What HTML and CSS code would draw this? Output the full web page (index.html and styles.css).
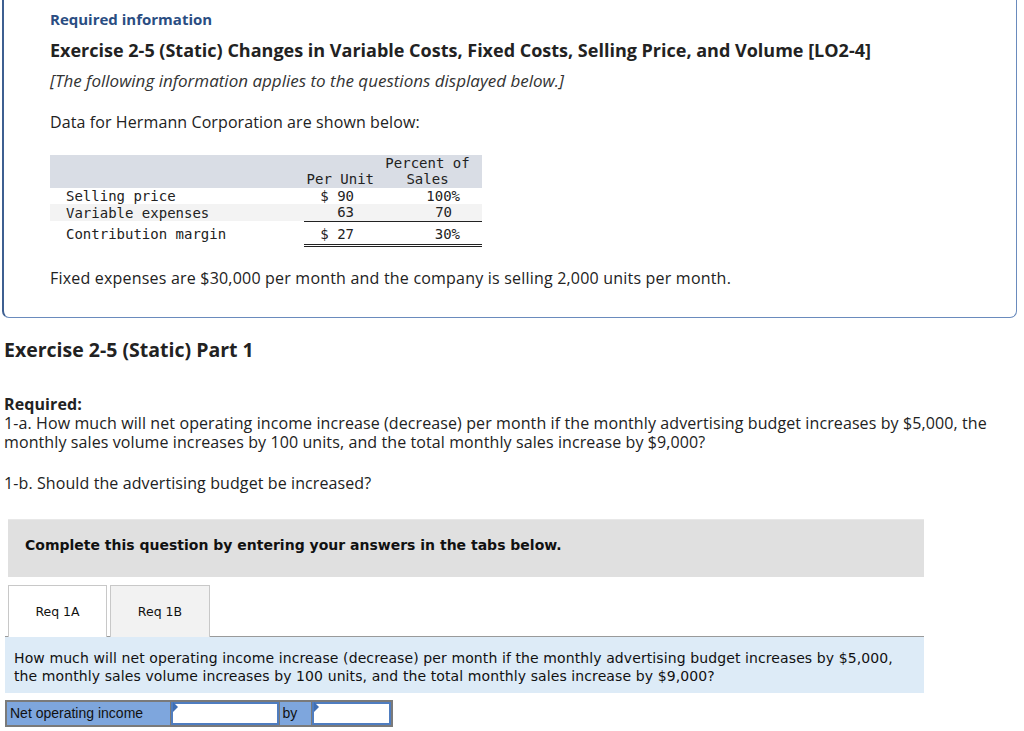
FILE: index.html
```html
<!DOCTYPE html>
<html>
<head>
<meta charset="utf-8">
<link rel="stylesheet" href="styles.css">
</head>
<body>
<div class="info-box">
  <div class="req-info">Required information</div>
  <h1 class="ex-title">Exercise 2-5 (Static) Changes in Variable Costs, Fixed Costs, Selling Price, and Volume [LO2-4]</h1>
  <p class="note">[The following information applies to the questions displayed below.]</p>
  <p class="para">Data for Hermann Corporation are shown below:</p>
  <table class="data">
    <colgroup><col class="c1"><col class="c2"><col class="c3"></colgroup>
    <tr class="head">
      <th></th>
      <th class="h-unit">Per Unit</th>
      <th class="h-pct">Percent of<br>Sales</th>
    </tr>
    <tr>
      <td class="lbl">Selling price</td>
      <td class="num">$ 90</td>
      <td class="pct">100%</td>
    </tr>
    <tr class="shade">
      <td class="lbl">Variable expenses</td>
      <td class="num under">63</td>
      <td class="pct under nop">70</td>
    </tr>
    <tr class="last">
      <td class="lbl">Contribution margin</td>
      <td class="num dbl">$ 27</td>
      <td class="pct dbl">30%</td>
    </tr>
  </table>
  <p class="para fixed">Fixed expenses are $30,000 per month and the company is selling 2,000 units per month.</p>
</div>

<h2 class="part">Exercise 2-5 (Static) Part 1</h2>

<div class="required">
  <div class="req-label">Required:</div>
  <p class="q">1-a. How much will net operating income increase (decrease) per month if the monthly advertising budget increases by $5,000, the monthly sales volume increases by 100 units, and the total monthly sales increase by $9,000?</p>
  <p class="q q2">1-b. Should the advertising budget be increased?</p>
</div>

<div class="complete">Complete this question by entering your answers in the tabs below.</div>

<div class="tabs">
  <div class="tab active">Req 1A</div>
  <div class="tab">Req 1B</div>
</div>
<div class="panel">How much will net operating income increase (decrease) per month if the monthly advertising budget increases by $5,000, the monthly sales volume increases by 100 units, and the total monthly sales increase by $9,000?</div>

<div class="answer">
  <div class="a-label">Net operating income</div>
  <div class="a-input wide"><span class="flag"></span></div>
  <div class="a-by">by</div>
  <div class="a-input narrow"><span class="flag"></span></div>
</div>
</body>
</html>
```

FILE: styles.css
```css
* { box-sizing: border-box; }
html, body { margin: 0; padding: 0; background: #fff; }
body {
  font-family: "Open Sans", Lato, sans-serif;
  color: #222;
  width: 1024px;
}
p, h1, h2 { margin: 0; }

.info-box {
  margin: 0 7px 0 2px;
  padding: 9px 20px 28px 46px;
  border: 1px solid #6a8bbd;
  border-left: 2px solid #3e5f91;
  border-top: none;
  border-radius: 0 0 7px 7px;
  height: 318px;
}
.req-info {
  font-weight: 700;
  font-size: 15px;
  line-height: 20px;
  color: #2a4d82;
}
.ex-title {
  margin-top: 11px;
  font-size: 18px;
  line-height: 20px;
  font-weight: 700;
  color: #222;
}
.note {
  margin-top: 11px;
  font-size: 17px;
  line-height: 20px;
  font-style: italic;
  color: #333;
}
.para {
  font-size: 16px;
  line-height: 20px;
  letter-spacing: 0.1px;
  color: #222;
}
.note + .para { margin-top: 21px; }

.data {
  margin-top: 23px;
  border-collapse: collapse;
  font-family: "DejaVu Sans Mono", monospace;
  font-size: 14px;
  line-height: 16px;
  color: #222;
}
.data col.c1 { width: 254px; }
.data col.c2 { width: 75px; }
.data col.c3 { width: 103px; }
.data td, .data th { padding: 0; font-weight: 400; }
.data tr.head { background: #d9dde5; }
.data tr.head th { height: 33px; vertical-align: bottom; padding-bottom: 1px; }
.data .h-unit { text-align: right; padding-right: 5px; }
.data .h-pct { text-align: center; padding-right: 6px; }
.data .lbl { padding-left: 16px; }
.data .num { text-align: right; padding-right: 25px; }
.data .pct { text-align: right; padding-right: 22px; }
.data .nop { padding-right: 30px; }
.data tr.shade { background: #f3f3f3; }
.data tr.shade td { height: 17px; }
.data td.under { border-bottom: 1px solid #222; }
.data tr.last td { height: 24px; vertical-align: middle; padding-top: 2px; }
.data td.dbl { border-bottom: 3px double #222; }

.fixed { margin-top: 21px; letter-spacing: 0.2px; }

.part {
  margin: 21px 0 0 4px;
  font-size: 19.5px;
  line-height: 22px;
  font-weight: 700;
  color: #222;
}

.required {
  margin: 34px 0 0 4px;
  font-size: 16px;
  line-height: 19px;
  letter-spacing: 0.1px;
  color: #222;
}
.req-label { font-weight: 700; }
.q { margin-right: 30px; }
.q2 { margin-top: 22px; }

.complete {
  margin: 26px 0 0 8px;
  width: 916px;
  height: 58px;
  background: #e0e0e0;
  border-top: 1px solid #e8e8e8;
  padding: 16px 0 0 17px;
  font-family: "DejaVu Sans", Verdana, sans-serif;
  font-weight: 700;
  font-size: 14px;
  line-height: 18px;
  color: #111;
}

.tabs {
  display: flex;
  gap: 3px;
  margin: 8px 0 0 8px;
  height: 51px;
}
.tab {
  width: 100px;
  height: 52px;
  display: flex;
  align-items: center;
  justify-content: center;
  border: 1px solid #c8c8c8;
  border-bottom: none;
  background: #f2f2f2;
  font-family: "DejaVu Sans", Verdana, sans-serif;
  font-size: 12.5px;
  color: #111;
  position: relative;
  z-index: 1;
}
.tab.active { background: #fff; width: 99px; }

.panel {
  margin-left: 5px;
  width: 919px;
  height: 57px;
  border-top: 1px solid #9a9a9a;
  background: #ddebf7;
  padding: 12px 16px 0 9px;
  font-family: "DejaVu Sans", Verdana, sans-serif;
  font-size: 14px;
  line-height: 18px;
  letter-spacing: 0.1px;
  color: #111;
}

.answer {
  display: flex;
  margin: 7px 0 0 5px;
  width: 388px;
  height: 27px;
  border: 2px solid #7a7a7a;
  background: #7ea6dd;
  font-family: "Liberation Sans", Arial, sans-serif;
  font-size: 14px;
  color: #111;
}
.a-label {
  width: 165px;
  padding-left: 3px;
  line-height: 23px;
  border-right: 1px solid #7a7a7a;
}
.a-input {
  position: relative;
  background: #fff;
  border: 2px solid #4f7dc0;
  height: 23px;
}
.a-input.wide { width: 108px; }
.a-input.narrow { width: 79px; }
.a-by {
  width: 34px;
  padding-left: 3px;
  line-height: 23px;
  border-left: 1px solid #7a7a7a;
  border-right: 1px solid #7a7a7a;
}
.flag {
  position: absolute;
  left: 0;
  top: -2px;
  width: 0;
  height: 0;
  border-top: 5px solid transparent;
  border-bottom: 5px solid transparent;
  border-left: 5px solid #3f6fb5;
}
```
